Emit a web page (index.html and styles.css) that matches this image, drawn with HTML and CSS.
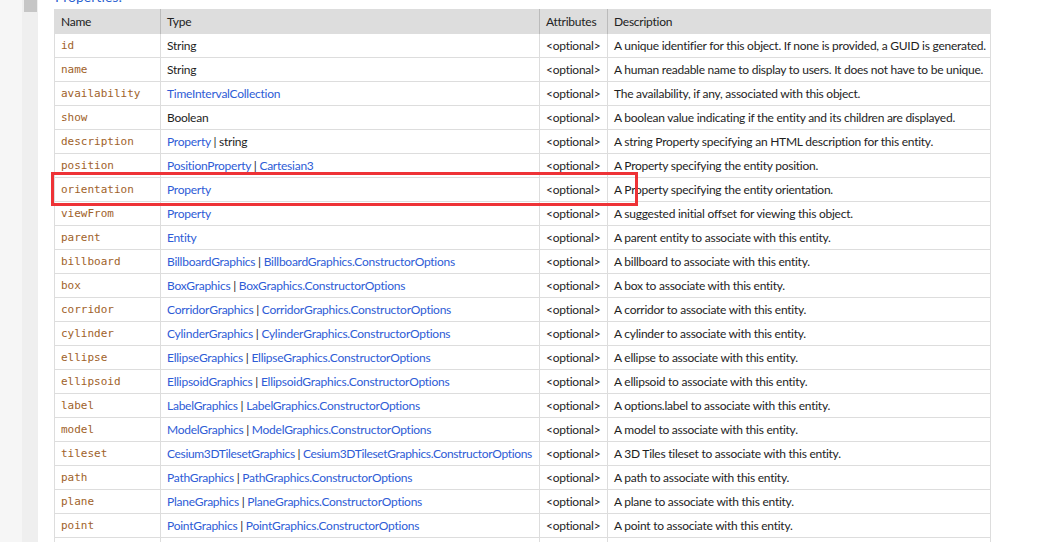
FILE: index.html
```html
<!DOCTYPE html>
<html>
<head>
<meta charset="utf-8">
<link rel="stylesheet" href="styles.css">
</head>
<body>
<div class="page">
  <div class="side"></div>
  <div class="track"><div class="thumb"></div></div>
  <main class="content">
    <h5 class="subsection">Properties:</h5>
    <div class="table-wrap">
      <table class="params">
        <colgroup>
          <col class="c-name"><col class="c-type"><col class="c-attr"><col class="c-desc">
        </colgroup>
        <thead>
          <tr><th>Name</th><th>Type</th><th>Attributes</th><th>Description</th></tr>
        </thead>
        <tbody>
          <tr><td class="name"><code>id</code></td><td>String</td><td>&lt;optional&gt;</td><td>A unique identifier for this object. If none is provided, a GUID is generated.</td></tr>
          <tr><td class="name"><code>name</code></td><td>String</td><td>&lt;optional&gt;</td><td>A human readable name to display to users. It does not have to be unique.</td></tr>
          <tr><td class="name"><code>availability</code></td><td><a>TimeIntervalCollection</a></td><td>&lt;optional&gt;</td><td>The availability, if any, associated with this object.</td></tr>
          <tr><td class="name"><code>show</code></td><td>Boolean</td><td>&lt;optional&gt;</td><td>A boolean value indicating if the entity and its children are displayed.</td></tr>
          <tr><td class="name"><code>description</code></td><td><a>Property</a> | string</td><td>&lt;optional&gt;</td><td>A string Property specifying an HTML description for this entity.</td></tr>
          <tr><td class="name"><code>position</code></td><td><a>PositionProperty</a> | <a>Cartesian3</a></td><td>&lt;optional&gt;</td><td>A Property specifying the entity position.</td></tr>
          <tr><td class="name"><code>orientation</code></td><td><a>Property</a></td><td>&lt;optional&gt;</td><td>A Property specifying the entity orientation.</td></tr>
          <tr><td class="name"><code>viewFrom</code></td><td><a>Property</a></td><td>&lt;optional&gt;</td><td>A suggested initial offset for viewing this object.</td></tr>
          <tr><td class="name"><code>parent</code></td><td><a>Entity</a></td><td>&lt;optional&gt;</td><td>A parent entity to associate with this entity.</td></tr>
          <tr><td class="name"><code>billboard</code></td><td><a>BillboardGraphics</a> | <a>BillboardGraphics.ConstructorOptions</a></td><td>&lt;optional&gt;</td><td>A billboard to associate with this entity.</td></tr>
          <tr><td class="name"><code>box</code></td><td><a>BoxGraphics</a> | <a>BoxGraphics.ConstructorOptions</a></td><td>&lt;optional&gt;</td><td>A box to associate with this entity.</td></tr>
          <tr><td class="name"><code>corridor</code></td><td><a>CorridorGraphics</a> | <a>CorridorGraphics.ConstructorOptions</a></td><td>&lt;optional&gt;</td><td>A corridor to associate with this entity.</td></tr>
          <tr><td class="name"><code>cylinder</code></td><td><a>CylinderGraphics</a> | <a>CylinderGraphics.ConstructorOptions</a></td><td>&lt;optional&gt;</td><td>A cylinder to associate with this entity.</td></tr>
          <tr><td class="name"><code>ellipse</code></td><td><a>EllipseGraphics</a> | <a>EllipseGraphics.ConstructorOptions</a></td><td>&lt;optional&gt;</td><td>A ellipse to associate with this entity.</td></tr>
          <tr><td class="name"><code>ellipsoid</code></td><td><a>EllipsoidGraphics</a> | <a>EllipsoidGraphics.ConstructorOptions</a></td><td>&lt;optional&gt;</td><td>A ellipsoid to associate with this entity.</td></tr>
          <tr><td class="name"><code>label</code></td><td><a>LabelGraphics</a> | <a>LabelGraphics.ConstructorOptions</a></td><td>&lt;optional&gt;</td><td>A options.label to associate with this entity.</td></tr>
          <tr><td class="name"><code>model</code></td><td><a>ModelGraphics</a> | <a>ModelGraphics.ConstructorOptions</a></td><td>&lt;optional&gt;</td><td>A model to associate with this entity.</td></tr>
          <tr><td class="name"><code>tileset</code></td><td class="tight"><a>Cesium3DTilesetGraphics</a> | <a>Cesium3DTilesetGraphics.ConstructorOptions</a></td><td>&lt;optional&gt;</td><td>A 3D Tiles tileset to associate with this entity.</td></tr>
          <tr><td class="name"><code>path</code></td><td><a>PathGraphics</a> | <a>PathGraphics.ConstructorOptions</a></td><td>&lt;optional&gt;</td><td>A path to associate with this entity.</td></tr>
          <tr><td class="name"><code>plane</code></td><td><a>PlaneGraphics</a> | <a>PlaneGraphics.ConstructorOptions</a></td><td>&lt;optional&gt;</td><td>A plane to associate with this entity.</td></tr>
          <tr><td class="name"><code>point</code></td><td><a>PointGraphics</a> | <a>PointGraphics.ConstructorOptions</a></td><td>&lt;optional&gt;</td><td>A point to associate with this entity.</td></tr>
          <tr><td class="name"><code>polygon</code></td><td><a>PolygonGraphics</a> | <a>PolygonGraphics.ConstructorOptions</a></td><td>&lt;optional&gt;</td><td>A polygon to associate with this entity.</td></tr>
        </tbody>
      </table>
      <div class="highlight"></div>
    </div>
  </main>
</div>
</body>
</html>
```
FILE: styles.css
```css
html, body {
  margin: 0;
  padding: 0;
  background: #ffffff;
  overflow: hidden;
}
.page {
  display: flex;
  height: 542px;
  font-family: "Lato", "Liberation Sans", sans-serif;
  color: #1e1e1e;
}
.side {
  width: 22px;
  background: #f6f6f6;
  flex: none;
}
.track {
  width: 16px;
  background: #efefef;
  flex: none;
}
.thumb {
  margin-left: 2px;
  width: 13px;
  height: 12px;
  background: #c6c6c6;
}
.content {
  flex: 1;
  padding-left: 16px;
}
.subsection {
  margin: -11px 0 0 1px;
  height: 20px;
  font-size: 14px;
  font-weight: normal;
  color: #2a5fd0;
  line-height: 16px;
}
.table-wrap {
  position: relative;
  width: 936px;
}
.params {
  border-collapse: collapse;
  table-layout: fixed;
  width: 936px;
  font-size: 12px;
  letter-spacing: -0.25px;
}
.c-name { width: 106px; }
.c-type { width: 379px; }
.c-attr { width: 68px; }
.c-desc { width: 383px; }
.params th {
  background: #dddddd;
  font-weight: normal;
  text-align: left;
  height: 24px;
  padding: 1px 6px 0;
  border-left: 1px solid #bbbbbb;
  color: #222;
  box-sizing: border-box;
}
.params th:first-child { border-left: 1px solid #dddddd; }
.params th:last-child { border-right: 1px solid #dddddd; }
.params td {
  height: 24px;
  padding: 0 6px;
  border: 1px solid #dddddd;
  box-sizing: border-box;
  white-space: nowrap;
  overflow: hidden;
}
.params td.tight { letter-spacing: -0.34px; }
.params a {
  color: #2e5cd6;
  text-decoration: none;
}
.name code {
  font-family: "DejaVu Sans Mono", "Liberation Mono", monospace;
  font-size: 11px;
  letter-spacing: 0;
  color: #a0622a;
  position: relative;
  top: -1px;
}
.highlight {
  position: absolute;
  left: -3px;
  top: 163px;
  width: 581px;
  height: 28px;
  border: 3px solid #ee3236;
}
```
